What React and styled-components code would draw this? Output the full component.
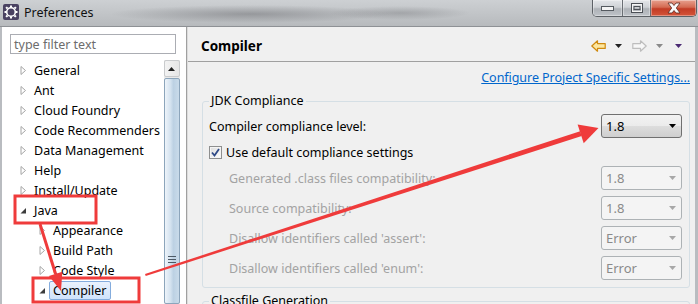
import React from 'react';
import styled, { createGlobalStyle } from 'styled-components';

const Global = createGlobalStyle`
  html, body { margin: 0; padding: 0; background: #fff; }
  body { font-family: "Noto Sans", "Open Sans", sans-serif; font-size: 12.5px; color: #000; }
  * { box-sizing: border-box; }
`;

const Window = styled.div`
  position: relative;
  width: 698px;
  height: 304px;
  overflow: hidden;
  display: flex;
  flex-direction: column;
  background: #b9bcc0;
`;

const TitleBar = styled.div`
  height: 27px;
  flex: none;
  display: flex;
  align-items: flex-start;
  background:
    radial-gradient(ellipse 140px 9px at 250px 14px, rgba(70,70,75,0.35), rgba(70,70,75,0)),
    radial-gradient(ellipse 70px 7px at 400px 13px, rgba(70,70,75,0.25), rgba(70,70,75,0)),
    linear-gradient(#cdd0d3, #b7babd);
  border-bottom: 1px solid #8e9195;
`;

const AppIcon = styled.svg`
  margin: 4px 0 0 3px;
  flex: none;
`;

const TitleText = styled.span`
  margin: 4px 0 0 5px;
  font-size: 12.5px;
  color: #111;
`;

const Spacer = styled.div`
  flex: 1;
`;

const WinButtons = styled.div`
  display: flex;
  height: 17px;
  margin-right: 1px;
  border: 1px solid #5d6166;
  border-top: none;
  border-radius: 0 0 5px 5px;
  overflow: hidden;
`;

const WinButton = styled.div`
  width: ${p => p.$w}px;
  height: 100%;
  display: flex;
  align-items: center;
  justify-content: center;
  border-left: ${p => (p.$first ? 'none' : '1px solid #6a6e73')};
  background: ${p =>
    p.$close
      ? 'linear-gradient(#e7a08e 0%, #d46a52 45%, #c23c25 55%, #d4553a 100%)'
      : 'linear-gradient(#e4e6e9 0%, #cfd2d6 45%, #aeb2b7 55%, #bfc3c8 100%)'};
  box-shadow: inset 0 0 0 1px rgba(255,255,255,0.35);
`;

const Body = styled.div`
  flex: 1;
  min-height: 0;
  display: flex;
  padding: 0 3px 0 2px;
`;

const Sidebar = styled.div`
  width: 185px;
  flex: none;
  background: #fff;
  border-right: 1px solid #a0a0a0;
  display: flex;
  flex-direction: column;
  padding-top: 7px;
`;

const FilterInput = styled.div`
  margin-left: 8px;
  width: 166px;
  height: 20px;
  border: 1px solid #abadb3;
  padding-left: 3px;
  display: flex;
  align-items: center;
  color: #6d6d6d;
  font-size: 12.5px;
`;

const TreeArea = styled.div`
  margin-top: 6px;
  flex: 1;
  display: flex;
  padding-right: 10px;
  min-height: 0;
`;

const TreeList = styled.div`
  flex: 1;
  display: flex;
  flex-direction: column;
`;

const TreeRow = styled.div`
  height: 20px;
  flex: none;
  display: flex;
  align-items: center;
  padding-left: ${p => 18 + p.$level * 19}px;
  white-space: nowrap;
`;

const Expander = styled.span`
  width: 10px;
  flex: none;
  display: flex;
  align-items: center;
`;

const TreeLabel = styled.span`
  height: 19px;
  display: flex;
  align-items: center;
  padding: 0 3px;
  border: 1px solid ${p => (p.$selected ? '#84acdd' : 'transparent')};
  border-radius: 2px;
  background: ${p => (p.$selected ? 'linear-gradient(#eaf2fd, #d0e3fb)' : 'transparent')};
`;

const Scrollbar = styled.div`
  width: 16px;
  flex: none;
  display: flex;
  flex-direction: column;
  background: #eaeaea;
`;

const ScrollButton = styled.div`
  height: 17px;
  flex: none;
  border: 1px solid #c9cbcd;
  border-radius: 2px;
  background: linear-gradient(90deg, #f3f3f3, #e6e6e6);
  display: flex;
  align-items: center;
  justify-content: center;
`;

const ScrollThumb = styled.div`
  flex: 1;
  margin-top: 1px;
  border: 1px solid #8ca5bb;
  border-radius: 2px;
  background: linear-gradient(90deg, #eef4fa 0%, #d3e2ef 40%, #bcd1e3 60%, #c9dbea 100%);
  display: flex;
  align-items: flex-start;
  justify-content: center;
  padding-top: 177px;
`;

const Main = styled.div`
  flex: 1;
  min-width: 0;
  background: #f0f0f0;
  border-left: 1px solid #dcdcdc;
  display: flex;
  flex-direction: column;
`;

const Header = styled.div`
  height: 35px;
  flex: none;
  display: flex;
  align-items: center;
  justify-content: space-between;
  padding: 3px 13px 0 13px;
  border-bottom: 1px solid #a0a0a0;
`;

const PageTitle = styled.span`
  font-weight: bold;
  font-size: 13.5px;
`;

const NavBar = styled.div`
  display: flex;
  align-items: center;
`;

const NavItem = styled.span`
  display: flex;
  align-items: center;
  margin-left: ${p => p.$ml || 0}px;
`;

const Content = styled.div`
  flex: 1;
  display: flex;
  flex-direction: column;
  padding: 7px 5px 0 14px;
`;

const LinkRow = styled.div`
  display: flex;
  justify-content: flex-end;
`;

const Link = styled.a`
  color: #0066cc;
  text-decoration: underline;
  font-size: 12.5px;
  letter-spacing: -0.05px;
  cursor: pointer;
`;

const Group = styled.fieldset`
  margin: ${p => p.$mt}px 0 0 0;
  padding: 5px 6px 7px 6px;
  border: 1px solid #d5dfe5;
  border-radius: 3px;
  display: flex;
  flex-direction: column;
  gap: 6px;
  min-width: 0;
`;

const Legend = styled.legend`
  padding: 0 2px;
  margin-left: 0;
  line-height: 16px;
`;

const FieldRow = styled.div`
  height: ${p => (p.$short ? 16 : 24)}px;
  display: flex;
  align-items: center;
  justify-content: space-between;
  padding-left: ${p => (p.$indent ? 20 : 0)}px;
  color: ${p => (p.$disabled ? '#a3a3a3' : '#000')};
`;

const CheckLabel = styled.label`
  display: flex;
  align-items: center;
  gap: 4px;
`;

const CheckBox = styled.span`
  width: 13px;
  height: 13px;
  border: 1px solid #8e8f8f;
  background: linear-gradient(135deg, #dcdcdc, #fefefe);
  display: flex;
  align-items: center;
  justify-content: center;
  box-shadow: inset 0 0 0 1px #f4f4f4;
`;

const Combo = styled.div`
  width: 81px;
  height: 24px;
  margin-right: 1px;
  border: 1px solid ${p => (p.$disabled ? '#adb2b5' : '#707070')};
  border-radius: 3px;
  background: ${p =>
    p.$disabled
      ? '#f4f4f4'
      : 'linear-gradient(#f2f2f2 0%, #ebebeb 50%, #dddddd 50%, #cfcfcf 100%)'};
  display: flex;
  align-items: center;
  justify-content: space-between;
  padding: 0 5px 0 4px;
  color: ${p => (p.$disabled ? '#8a8a8a' : '#000')};
  font-size: 13px;
`;

const Overlay = styled.svg`
  position: absolute;
  left: 0;
  top: 0;
  pointer-events: none;
`;

const RightTri = ({ color = '#a6a6a6' }) => (
  <svg width="7" height="9" viewBox="0 0 7 9">
    <path d="M1 0.5 L5.5 4.5 L1 8.5 Z" fill="#fff" stroke={color} strokeWidth="1" />
  </svg>
);

const OpenTri = () => (
  <svg width="7" height="9" viewBox="0 0 7 9">
    <path d="M6 2 L6 7.5 L0.5 7.5 Z" fill="#3c3c3c" />
  </svg>
);

const DropArrow = ({ color = '#000' }) => (
  <svg width="7" height="4" viewBox="0 0 7 4">
    <path d="M0 0 L7 0 L3.5 4 Z" fill={color} />
  </svg>
);

const treeItems = [
  { label: 'General', level: 0 },
  { label: 'Ant', level: 0 },
  { label: 'Cloud Foundry', level: 0 },
  { label: 'Code Recommenders', level: 0 },
  { label: 'Data Management', level: 0 },
  { label: 'Help', level: 0 },
  { label: 'Install/Update', level: 0 },
  { label: 'Java', level: 0, open: true },
  { label: 'Appearance', level: 1 },
  { label: 'Build Path', level: 1 },
  { label: 'Code Style', level: 1 },
  { label: 'Compiler', level: 1, open: true, selected: true },
];

const disabledRows = [
  { label: 'Generated .class files compatibility:', value: '1.8' },
  { label: 'Source compatibility:', value: '1.8' },
  { label: "Disallow identifiers called 'assert':", value: 'Error' },
  { label: "Disallow identifiers called 'enum':", value: 'Error' },
];

const RED = '#ef3b3b';

export default function App() {
  return (
    <>
      <Global />
      <Window>
        <TitleBar>
          <AppIcon width="16" height="16" viewBox="0 0 16 16">
            <rect x="0" y="0" width="16" height="16" rx="2" fill="#4a4262" />
            <g stroke="#fff" strokeWidth="1.6" fill="none">
              <circle cx="8" cy="8" r="4.3" />
            </g>
            <g fill="#fff">
              <rect x="7" y="1.5" width="2" height="2.2" />
              <rect x="7" y="12.3" width="2" height="2.2" />
              <rect x="1.5" y="7" width="2.2" height="2" />
              <rect x="12.3" y="7" width="2.2" height="2" />
              <rect x="2.8" y="2.8" width="2" height="2" transform="rotate(45 3.8 3.8)" />
              <rect x="11.2" y="2.8" width="2" height="2" transform="rotate(45 12.2 3.8)" />
              <rect x="2.8" y="11.2" width="2" height="2" transform="rotate(45 3.8 12.2)" />
              <rect x="11.2" y="11.2" width="2" height="2" transform="rotate(45 12.2 12.2)" />
            </g>
            <circle cx="8" cy="8" r="2.4" fill="#4a4262" />
          </AppIcon>
          <TitleText>Preferences</TitleText>
          <Spacer />
          <WinButtons>
            <WinButton $w={29} $first>
              <svg width="13" height="5" viewBox="0 0 13 5">
                <rect x="0.5" y="0.5" width="12" height="4" fill="#f4f4f4" stroke="#555a60" />
              </svg>
            </WinButton>
            <WinButton $w={28}>
              <svg width="12" height="10" viewBox="0 0 12 10">
                <rect x="0.5" y="0.5" width="11" height="9" fill="none" stroke="#4c5056" />
                <rect x="1.5" y="1.5" width="9" height="7" fill="none" stroke="#f4f4f4" />
                <rect x="3" y="3.5" width="6" height="3" fill="none" stroke="#4c5056" />
              </svg>
            </WinButton>
            <WinButton $w={46} $close>
              <svg width="16" height="12" viewBox="0 0 16 12">
                <path d="M2 1 L6 1 L8 3.5 L10 1 L14 1 L10.3 6 L14 11 L10 11 L8 8.5 L6 11 L2 11 L5.7 6 Z" fill="#fafafa" stroke="#5a2a22" strokeWidth="0.8" />
              </svg>
            </WinButton>
          </WinButtons>
        </TitleBar>
        <Body>
          <Sidebar>
            <FilterInput>type filter text</FilterInput>
            <TreeArea>
              <TreeList>
                {treeItems.map(item => (
                  <TreeRow key={item.label} $level={item.level}>
                    <Expander>{item.open ? <OpenTri /> : <RightTri />}</Expander>
                    <TreeLabel $selected={item.selected}>{item.label}</TreeLabel>
                  </TreeRow>
                ))}
              </TreeList>
              <Scrollbar>
                <ScrollButton>
                  <svg width="7" height="4" viewBox="0 0 7 4">
                    <path d="M0 4 L7 4 L3.5 0 Z" fill="#222" />
                  </svg>
                </ScrollButton>
                <ScrollThumb>
                  <svg width="8" height="7" viewBox="0 0 8 7">
                    <g stroke="#4d5a66" strokeWidth="1">
                      <line x1="0" y1="0.5" x2="8" y2="0.5" />
                      <line x1="0" y1="3.5" x2="8" y2="3.5" />
                      <line x1="0" y1="6.5" x2="8" y2="6.5" />
                    </g>
                  </svg>
                </ScrollThumb>
              </Scrollbar>
            </TreeArea>
          </Sidebar>
          <Main>
            <Header>
              <PageTitle>Compiler</PageTitle>
              <NavBar>
                <NavItem>
                  <svg width="15" height="12" viewBox="0 0 15 12">
                    <path d="M0.8 6 L6.5 0.8 L6.5 3.6 L14.2 3.6 L14.2 8.4 L6.5 8.4 L6.5 11.2 Z" fill="#fde7a0" stroke="#cf8a10" strokeWidth="1.2" strokeLinejoin="round" />
                  </svg>
                </NavItem>
                <NavItem $ml={9}><DropArrow color="#222" /></NavItem>
                <NavItem $ml={10}>
                  <svg width="15" height="12" viewBox="0 0 15 12">
                    <path d="M14.2 6 L8.5 0.8 L8.5 3.6 L0.8 3.6 L0.8 8.4 L8.5 8.4 L8.5 11.2 Z" fill="#f7f7f7" stroke="#bdbdbd" strokeWidth="1.2" strokeLinejoin="round" />
                  </svg>
                </NavItem>
                <NavItem $ml={9}><DropArrow color="#8a8a8a" /></NavItem>
                <NavItem $ml={12}><DropArrow color="#4b2a73" /></NavItem>
              </NavBar>
            </Header>
            <Content>
              <LinkRow>
                <Link>Configure Project Specific Settings...</Link>
              </LinkRow>
              <Group $mt={7}>
                <Legend>JDK Compliance</Legend>
                <FieldRow>
                  <span>Compiler compliance level:</span>
                  <Combo>
                    <span>1.8</span>
                    <DropArrow />
                  </Combo>
                </FieldRow>
                <FieldRow $short>
                  <CheckLabel>
                    <CheckBox>
                      <svg width="9" height="9" viewBox="0 0 9 9">
                        <path d="M1 4.5 L3.5 7.5 L8 1" fill="none" stroke="#2f4a87" strokeWidth="1.8" />
                      </svg>
                    </CheckBox>
                    Use default compliance settings
                  </CheckLabel>
                </FieldRow>
                {disabledRows.map(r => (
                  <FieldRow key={r.label} $indent $disabled>
                    <span>{r.label}</span>
                    <Combo $disabled>
                      <span>{r.value}</span>
                      <DropArrow color="#a8a8a8" />
                    </Combo>
                  </FieldRow>
                ))}
              </Group>
              <Group $mt={5}>
                <Legend>Classfile Generation</Legend>
              </Group>
            </Content>
          </Main>
        </Body>
        <Overlay width="698" height="304" viewBox="0 0 698 304">
          <rect x="15" y="196" width="81" height="27" fill="none" stroke={RED} strokeWidth="3" />
          <rect x="33" y="278" width="106" height="24" fill="none" stroke={RED} strokeWidth="3" />
          <line x1="40" y1="224" x2="55.6" y2="274" stroke={RED} strokeWidth="3" />
          <polygon points="61,291 48.9,275.9 62.3,271.7" fill={RED} />
          <polygon points="145,274 145.7,276 581.7,136 580.1,131.2" fill={RED} />
          <polygon points="598.5,128 583.7,143.2 577.6,124.4" fill={RED} />
        </Overlay>
      </Window>
    </>
  );
}
